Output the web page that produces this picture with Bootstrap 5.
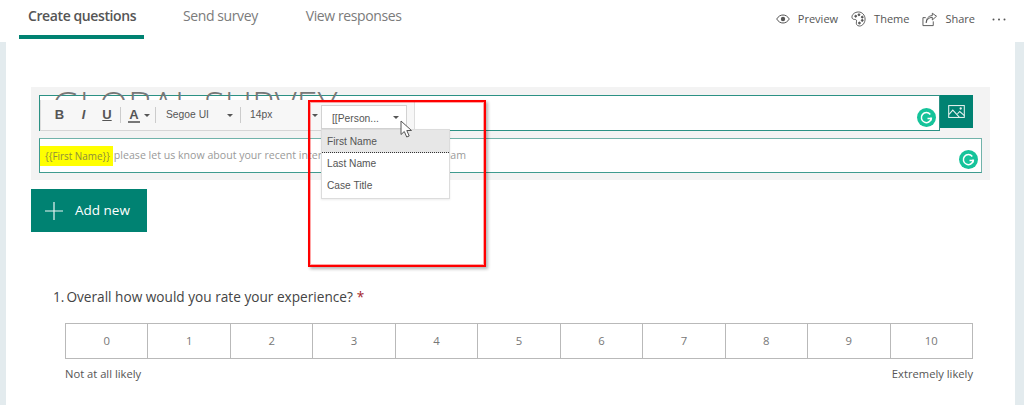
<!DOCTYPE html>
<html lang="en">
<head>
<meta charset="utf-8">
<title>Create questions</title>
<link href="https://cdn.jsdelivr.net/npm/bootstrap@5.3.0/dist/css/bootstrap.min.css" rel="stylesheet">
<style>
html,body{height:405px;overflow:hidden}
body{background:#e3ebee;font-family:"Open Sans","Noto Sans",sans-serif;color:#444}
.topbar{height:42px;background:#fff;padding-left:19px;padding-right:18px}
.tab-link{display:block;height:39px;margin-right:30px;padding:6px 9px 0;font-size:14px;letter-spacing:-.4px;line-height:20px;color:#7b7b7b;text-decoration:none;white-space:nowrap}
.tab-link.is-on{color:#555;font-weight:600;border-bottom:4px solid #008272;width:125px}
.cmd{display:flex;align-items:center;gap:8px;font-size:11px;color:#555;height:38px}
.cmd svg{display:block}
.cmd-set{gap:13px}
.sheet{position:relative;background:#fff;margin:0 9px 0 6px;height:363px;padding:45px 25px 0}
.title-panel{position:relative;background:#f3f3f3;height:93px;padding:8px 8px 7px}
.title-word{position:absolute;left:21px;top:0;font-weight:300;font-size:38px;line-height:37px;color:#777;white-space:nowrap;z-index:2;height:13px;overflow:hidden}
.title-row{height:36px}
.title-box{width:901px;height:36px;background:#fff;border:1px solid #2b9184;position:relative}
.pic-btn{width:33px;height:33px;background:#008272;display:flex;align-items:center;justify-content:center;margin-right:-1px}
.sub-box{position:relative;height:35px;margin-top:7px;background:#fff;border:1px solid #71b3aa;border-left-color:#3f9b8f;border-bottom-color:#3f9b8f;display:flex;align-items:center;font-size:10.6px;color:#9a9a9a;white-space:nowrap}
.mark-yellow{background:#ff0;color:#8d8d3c;height:20px;line-height:20px;padding:0 3px 0 5px;margin-right:1px;font-size:9.9px}
.g-badge{position:absolute;width:19px;height:19px;display:block}
.tool-strip{position:absolute;left:9px;top:13px;width:375px;height:31px;background:#f7f7f7;border:1px solid #ddd;border-top:0;border-bottom:1px solid #d6d6d6;z-index:3;display:flex;align-items:center;font-family:"Liberation Sans",sans-serif;font-size:10.3px;color:#555}
.tg{flex:none;text-align:center;line-height:14px}
.tb{font-size:13px;font-weight:700;color:#555;line-height:16px}
.sep{flex:none;width:1px;height:16px;background:#ccc}
.tri{flex:none;width:0;height:0;border:3px solid transparent;border-top:3px solid #555;border-bottom:0}
.person{position:absolute;left:280px;top:5px;width:86px;height:24px;background:#fff;border:1px solid #d2d2d2;padding:5px 0 0 10px}
.person .tri{position:absolute;left:71px;top:10px}
.menu-drop{position:absolute;display:block;left:290px;top:42px;width:129px;min-width:0;height:70px;padding:0;margin:0;border:1px solid #dcdcdc;border-radius:0;font-family:"Liberation Sans",sans-serif;z-index:4;box-shadow:0 1px 2px rgba(0,0,0,.08)}
.menu-drop .dropdown-item{height:22px;line-height:22px;padding:0 5px;color:#555;font-size:10.2px}
.menu-drop .dropdown-item.is-hot{background:#e7e7e7;border-bottom:1px dotted #333;height:23px;line-height:24px}
.redline{position:absolute;left:277px;top:13px;width:178px;height:167px;border:2px solid #f00;z-index:5;pointer-events:none;box-shadow:2px 2px 3px rgba(0,0,0,.3),inset 0 0 0 1px rgba(255,0,0,.35)}
.arrow-ptr{position:absolute;left:369px;top:33px;z-index:6}
.add-btn{display:flex;align-items:center;margin-top:9px;width:116px;height:43px;background:#008272;border-radius:0;border:0;padding:0 0 0 14px;color:#fff;font-size:13.5px;--bs-btn-hover-bg:#008272}
.add-btn svg{margin-right:12px}
.q-line{margin:53px 0 0 22px;font-size:13.65px;line-height:24px;color:#444;display:flex}
.q-line .qn{margin-right:2px}
.q-line .req{color:#a4262c;margin-left:4px}
.scale{margin:14px 17px 0 34px;height:36px;border:1px solid #b9b9b9}
.scale-cell{flex:1 1 0;display:flex;align-items:center;justify-content:center;border-right:1px solid #b9b9b9;font-size:11.3px;color:#777}
.scale-cell:last-child{border-right:0}
.scale-ends{margin:6px 17px 0 34px;font-size:11.2px;line-height:18px;color:#555}
</style>
</head>
<body>
<header class="topbar d-flex justify-content-between">
  <nav class="d-flex">
    <a class="tab-link is-on" href="#">Create questions</a>
    <a class="tab-link" href="#">Send survey</a>
    <a class="tab-link" href="#">View responses</a>
  </nav>
  <div class="d-flex cmd-set">
    <div class="cmd">
      <svg width="14" height="10" viewBox="0 0 14 10" fill="none" stroke="#555" stroke-width="1"><path d="M.7 5C2.500 2.200 4.500 1 7 1s4.500 1.200 6.300 4C11.500 7.800 9.500 9 7 9S2.500 7.800.7 5z"/><circle cx="7" cy="5" r="2.200" fill="#555" stroke="none"/></svg>
      <span>Preview</span>
    </div>
    <div class="cmd">
      <svg width="15" height="16" viewBox="0 0 16 17" fill="none" stroke="#555" stroke-width="1"><path d="M8 1C4 1 1 3.600 1 6.500c0 1.800 1.500 2.500 3 2.500 1.800 0 2.300 1 1.800 2.500C5.300 13.500 6 16 9 16c3.500 0 6-3.500 6-7.500S12 1 8 1z"/><circle cx="5" cy="5.500" r="1" fill="#555"/><circle cx="8.500" cy="4" r="1" fill="#555"/><circle cx="12" cy="6.500" r="1" fill="#555"/><circle cx="12" cy="10" r="1" fill="#555"/><circle cx="9" cy="12.800" r="1" fill="#555"/></svg>
      <span>Theme</span>
    </div>
    <div class="cmd">
      <svg width="15" height="15" viewBox="0 0 16 15" fill="none" stroke="#555" stroke-width="1"><path d="M1 5.500V14h11V9.500M1 5.500h3"/><path d="M4.500 11c.3-3.500 3-5.800 6.500-5.800V8L15.500 4 11 .8v2.500C7 3.500 4.500 6.500 4.500 11z"/></svg>
      <span>Share</span>
    </div>
    <div class="cmd ms-1">
      <svg width="14" height="3" viewBox="0 0 14 3" fill="#555"><circle cx="1.500" cy="1.500" r="1"/><circle cx="7" cy="1.500" r="1"/><circle cx="12.500" cy="1.500" r="1"/></svg>
    </div>
  </div>
</header>
<main class="sheet">
  <section class="title-panel">
    <div class="title-word">GLOBAL SURVEY</div>
    <div class="title-row d-flex">
      <div class="title-box">
        <svg class="g-badge" style="right:3px;top:12px" viewBox="0 0 19 19"><circle cx="9.500" cy="9.500" r="9.500" fill="#15c39a"/><path d="M13.300 6.500a5 5 0 1 0 1 4H10.500" fill="none" stroke="#fff" stroke-width="1.500"/><path d="M14 9.500v3" stroke="#fff" stroke-width="1.300"/></svg>
      </div>
      <div class="pic-btn">
        <svg width="17" height="13" viewBox="0 0 18 14" fill="none" stroke="#e9f3f1" stroke-width="1.100"><rect x=".6" y=".6" width="16.800" height="12.800"/><path d="M1 10l4-4.500 7 7.500M10 9.500l2.500-2.500 5 4.500"/><circle cx="13.500" cy="3.800" r=".7" fill="#e9f3f1"/></svg>
      </div>
    </div>
    <div class="sub-box">
      <span class="mark-yellow">{{First Name}}</span><span>please let us know about your recent interaction with our support team</span>
      <svg class="g-badge" style="right:3px;top:11px" viewBox="0 0 19 19"><circle cx="9.500" cy="9.500" r="9.500" fill="#15c39a"/><path d="M13.300 6.500a5 5 0 1 0 1 4H10.500" fill="none" stroke="#fff" stroke-width="1.500"/><path d="M14 9.500v3" stroke="#fff" stroke-width="1.300"/></svg>
    </div>

    <div class="tool-strip">
      <span class="tg tb" style="margin-left:13px;width:11px">B</span>
      <span class="tg tb fst-italic" style="margin-left:14px;width:9px">I</span>
      <span class="tg tb text-decoration-underline" style="margin-left:13px;width:12px">U</span>
      <span class="sep" style="margin-left:7px"></span>
      <span class="tg tb" style="margin-left:7px;width:12px;border-bottom:2px solid #777;line-height:13px">A</span>
      <span class="tri" style="margin-left:4px"></span>
      <span class="sep" style="margin-left:5px"></span>
      <span class="tg" style="margin-left:10px;width:44px;text-align:left">Segoe UI</span>
      <span class="tri" style="margin-left:17px"></span>
      <span class="sep" style="margin-left:7px"></span>
      <span class="tg" style="margin-left:9px;width:24px;text-align:left">14px</span>
      <span class="tri" style="margin-left:38px"></span>
      <div class="person">[[Person...<span class="tri"></span></div>
    </div>

    <div class="dropdown-menu menu-drop">
      <a class="dropdown-item is-hot" href="#">First Name</a>
      <a class="dropdown-item" href="#">Last Name</a>
      <a class="dropdown-item" href="#">Case Title</a>
    </div>
    <div class="redline"></div>
    <svg class="arrow-ptr" width="14" height="19" viewBox="0 0 14 19"><path d="M1 1v13.500l3.300-3 2.400 5.500 2.500-1-2.400-5.500h4.700z" fill="#fff" stroke="#555" stroke-width="1"/></svg>
  </section>

  <button type="button" class="btn add-btn">
    <svg width="18" height="18" viewBox="0 0 18 18" stroke="#e9f5f3" stroke-width="1.200"><path d="M9 0v18M0 9h18"/></svg>
    <span>Add new</span>
  </button>

  <div class="q-line"><span class="qn">1.</span><span>Overall how would you rate your experience?</span><span class="req">*</span></div>
  <div class="scale d-flex">
    <div class="scale-cell">0</div><div class="scale-cell">1</div><div class="scale-cell">2</div><div class="scale-cell">3</div><div class="scale-cell">4</div><div class="scale-cell">5</div><div class="scale-cell">6</div><div class="scale-cell">7</div><div class="scale-cell">8</div><div class="scale-cell">9</div><div class="scale-cell">10</div>
  </div>
  <div class="scale-ends d-flex justify-content-between"><span>Not at all likely</span><span>Extremely likely</span></div>
</main>
<script src="https://cdn.jsdelivr.net/npm/bootstrap@5.3.0/dist/js/bootstrap.bundle.min.js"></script>
</body>
</html>
